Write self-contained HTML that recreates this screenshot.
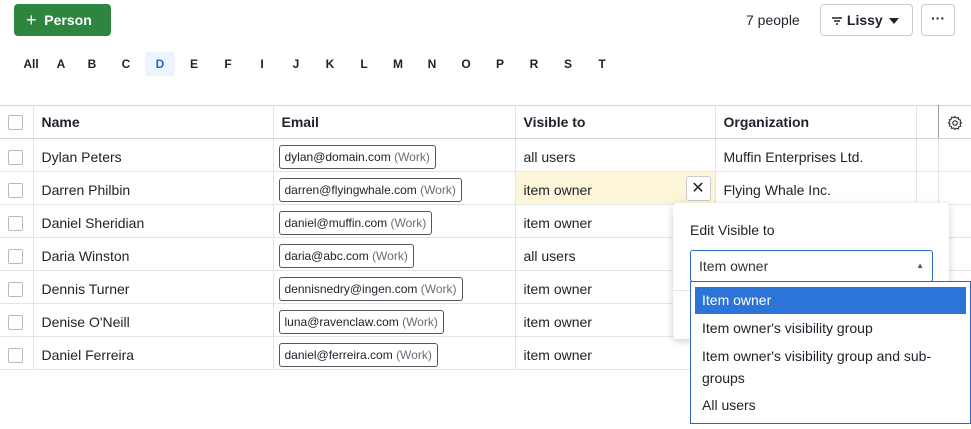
<!DOCTYPE html>
<html><head><style>
*{box-sizing:border-box;margin:0;padding:0}
body{width:971px;height:429px;overflow:hidden;background:#fff;font-family:"Liberation Sans",sans-serif;color:#21232c;position:relative}
.abs{position:absolute}
.btn{position:absolute;left:14px;top:4px;width:97px;height:32px;background:#2e8540;border-radius:4px;color:#fff;font-weight:bold;font-size:14px;line-height:32px;padding-left:12px}
.letters{position:absolute;top:52px;left:16px;height:24px;font-size:12px;font-weight:bold}
.letters span{position:absolute;top:0;line-height:24px;text-align:center;width:30px}
table{position:absolute;top:105px;left:0;border-collapse:collapse;width:971px;font-size:14px}
td,th{border:1px solid #e3e4e6;height:33px;text-align:left;padding:0 8px;white-space:nowrap}
td{padding-top:3px}
th{border-top:1px solid #d0d2d5;border-bottom:1px solid #d0d2d5;font-weight:bold}
tr>*:first-child{border-left:none}
tr>*:last-child{border-right:none}
.cb{display:inline-block;width:15px;height:15px;border:1px solid #b8babe;border-radius:2px;vertical-align:middle}
td.e{padding-left:5px}
.chip{display:inline-block;border:1px solid #55575d;border-radius:3px;padding:3px 5px;font-size:12px;line-height:16px}
.chip i{font-style:normal;color:#6a6d75}
</style></head><body>
<div class="btn"><span style="font-size:18px;font-weight:normal;vertical-align:-1px">+</span>&nbsp;&nbsp;Person</div>
<div class="abs" style="left:746px;top:12px;font-size:14px">7 people</div>
<div class="abs" style="left:820px;top:4px;width:93px;height:32px;border:1px solid #c9cbcf;border-radius:4px;font-size:14px;font-weight:bold;line-height:30px;padding-left:10px">
<svg width="12" height="10" style="vertical-align:-1px"><path d="M1 2h10M3 5h6M5 8h2" stroke="#21232c" stroke-width="1.4"/></svg> Lissy <svg width="10" height="6" style="margin-left:2px;vertical-align:1px"><path d="M0 0h10L5 6z" fill="#21232c"/></svg></div>
<div class="abs" style="left:921px;top:4px;width:34px;height:32px;border:1px solid #c9cbcf;border-radius:4px;font-size:14px;font-weight:bold;line-height:26px;text-align:center">···</div>
<div class="letters">
<span style="left:0px;width:30px">All</span><span style="left:30px">A</span><span style="left:61px">B</span><span style="left:95px">C</span>
<span style="left:129px;color:#2a66c8;background:#eef4fd;border-radius:3px">D</span>
<span style="left:163px">E</span><span style="left:197px">F</span><span style="left:231px">I</span><span style="left:265px">J</span><span style="left:299px">K</span><span style="left:333px">L</span><span style="left:367px">M</span><span style="left:401px">N</span><span style="left:435px">O</span><span style="left:469px">P</span><span style="left:503px">R</span><span style="left:537px">S</span><span style="left:571px">T</span>
</div>
<table>
<tr><th style="width:33px"><span class="cb"></span></th><th style="width:240px">Name</th><th style="width:242px">Email</th><th style="width:200px">Visible to</th><th style="width:201px">Organization</th><th style="width:22px;border-right:1px solid #999"></th><th style="width:33px;text-align:center;padding:0"><svg width="16" height="16" viewBox="0 0 16 16" style="vertical-align:middle"><circle cx="8" cy="8" r="2.2" fill="none" stroke="#333" stroke-width="1.2"/><path d="M8 1.5l1.3 1.6 2-.6.4 2 2 .6-.6 2L14.5 8l-1.4 1.3.6 2-2 .6-.4 2-2-.6L8 14.5l-1.3-1.6-2 .6-.4-2-2-.6.6-2L1.5 8l1.4-1.3-.6-2 2-.6.4-2 2 .6z" fill="none" stroke="#333" stroke-width="1.1"/></svg></th></tr>
<tr><td><span class="cb"></span></td><td>Dylan Peters</td><td class="e"><span class="chip">dylan@domain.com <i>(Work)</i></span></td><td>all users</td><td>Muffin Enterprises Ltd.</td><td></td><td></td></tr>
<tr><td><span class="cb"></span></td><td>Darren Philbin</td><td class="e"><span class="chip">darren@flyingwhale.com <i>(Work)</i></span></td><td style="background:#fdf5d8;position:relative">item owner<span style="position:absolute;left:170px;top:4px;width:25px;height:25px;border:1px solid #c9cbcf;border-radius:3px;background:#fff;text-align:center;line-height:23px;font-size:16px">✕</span></td><td>Flying Whale Inc.</td><td></td><td></td></tr>
<tr><td><span class="cb"></span></td><td>Daniel Sheridian</td><td class="e"><span class="chip">daniel@muffin.com <i>(Work)</i></span></td><td>item owner</td><td></td><td></td><td></td></tr>
<tr><td><span class="cb"></span></td><td>Daria Winston</td><td class="e"><span class="chip">daria@abc.com <i>(Work)</i></span></td><td>all users</td><td></td><td></td><td></td></tr>
<tr><td><span class="cb"></span></td><td>Dennis Turner</td><td class="e"><span class="chip">dennisnedry@ingen.com <i>(Work)</i></span></td><td>item owner</td><td></td><td></td><td></td></tr>
<tr><td><span class="cb"></span></td><td>Denise O'Neill</td><td class="e"><span class="chip">luna@ravenclaw.com <i>(Work)</i></span></td><td>item owner</td><td></td><td></td><td></td></tr>
<tr><td><span class="cb"></span></td><td>Daniel Ferreira</td><td class="e"><span class="chip">daniel@ferreira.com <i>(Work)</i></span></td><td>item owner</td><td></td><td></td><td></td></tr>
</table>
<div class="abs" style="left:673px;top:203px;width:276px;height:136px;background:#fff;border-radius:4px;box-shadow:0 2px 8px rgba(0,0,0,.2)">
<div class="abs" style="left:17px;top:19px;font-size:14px">Edit Visible to</div>
<div class="abs" style="left:0;top:87px;width:276px;border-top:1px solid #e3e4e6"></div>
</div>
<div class="abs" style="left:690px;top:250px;width:243px;height:32px;border:1px solid #2a66c8;border-radius:3px;background:#fff;font-size:14px;line-height:30px;padding-left:8px;color:#333">Item owner<span style="position:absolute;right:8px;font-size:8px;color:#555">▲</span></div>
<div class="abs" style="left:690px;top:281px;width:281px;height:143px;border:1px solid #2a66c8;background:#fff;font-size:14px">
<div style="margin:5px 4px 0 4px;background:#2c74d8;color:#fff;height:27px;line-height:27px;padding-left:7px">Item owner</div>
<div style="padding-left:11px;line-height:28px">Item owner's visibility group</div>
<div style="padding-left:11px;line-height:22px;margin-top:3px">Item owner's visibility group and sub-<br>groups</div>
<div style="padding-left:11px;line-height:28px;margin-top:2px">All users</div>
</div>
</body></html>
